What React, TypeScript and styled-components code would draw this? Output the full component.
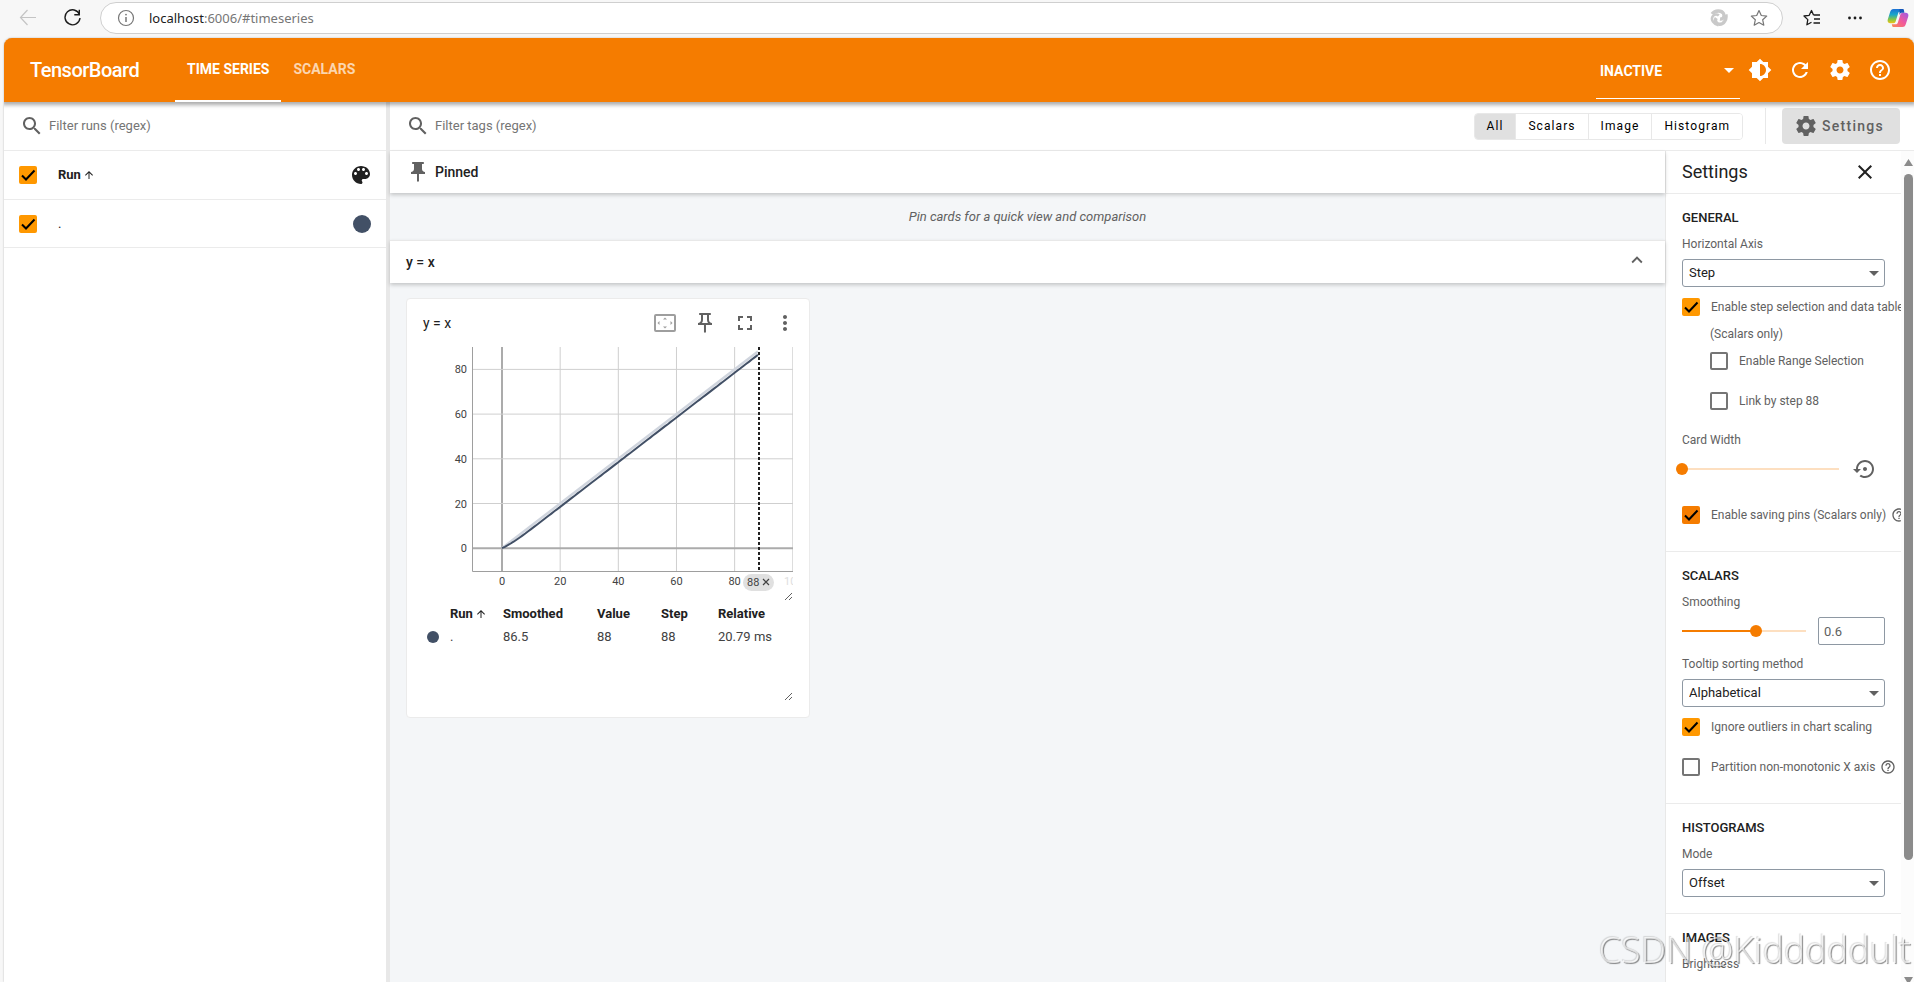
import React from "react";
import styled, { createGlobalStyle, css } from "styled-components";

const Global = createGlobalStyle`
  *, *::before, *::after { box-sizing: border-box; }
  html, body, #root { height: 100%; }
  body { margin: 0; overflow: hidden; background: #f7f7f7; color: #212121; font: 400 13px/20px Roboto, "Liberation Sans", sans-serif; }
  button, input, select { font: inherit; color: inherit; }
  button { border: 0; padding: 0; background: none; display: flex; align-items: center; justify-content: center; }
  svg { display: block; flex: none; }
  h1, h2, h3, p { margin: 0; }
`;

/* ---------- icons ---------- */

const paths = {
  search: "M15.5 14h-.79l-.28-.27C15.41 12.59 16 11.11 16 9.5 16 5.91 13.09 3 9.5 3S3 5.91 3 9.5 5.91 16 9.5 16c1.61 0 3.09-.59 4.23-1.57l.27.28v.79l5 4.99L20.49 19l-4.99-5zm-6 0C7.01 14 5 11.99 5 9.5S7.01 5 9.5 5 14 7.01 14 9.5 11.99 14 9.5 14z",
  gear: "M19.43 12.98c.04-.32.07-.64.07-.98s-.03-.66-.07-.98l2.11-1.65c.19-.15.24-.42.12-.64l-2-3.46c-.12-.22-.39-.3-.61-.22l-2.49 1c-.52-.4-1.08-.73-1.69-.98l-.38-2.65C14.46 2.18 14.25 2 14 2h-4c-.25 0-.46.18-.49.42l-.38 2.65c-.61.25-1.17.59-1.69.98l-2.49-1c-.23-.09-.49 0-.61.22l-2 3.46c-.13.22-.07.49.12.64l2.11 1.65c-.04.32-.07.65-.07.98s.03.66.07.98l-2.11 1.65c-.19.15-.24.42-.12.64l2 3.46c.12.22.39.3.61.22l2.49-1c.52.4 1.08.73 1.69.98l.38 2.65c.03.24.24.42.49.42h4c.25 0 .46-.18.49-.42l.38-2.65c.61-.25 1.17-.59 1.69-.98l2.49 1c.23.09.49 0 .61-.22l2-3.46c.12-.22.07-.49-.12-.64l-2.11-1.65zM12 15.5c-1.93 0-3.5-1.57-3.5-3.5s1.57-3.5 3.5-3.5 3.5 1.57 3.5 3.5-1.57 3.5-3.5 3.5z",
  help: "M11 18h2v-2h-2v2zm1-16C6.48 2 2 6.48 2 12s4.48 10 10 10 10-4.48 10-10S17.52 2 12 2zm0 18c-4.41 0-8-3.59-8-8s3.59-8 8-8 8 3.59 8 8-3.59 8-8 8zm0-14c-2.21 0-4 1.79-4 4h2c0-1.1.9-2 2-2s2 .9 2 2c0 2-3 1.75-3 5h2c0-2.25 3-2.5 3-5 0-2.21-1.79-4-4-4z",
  refresh: "M17.65 6.35C16.2 4.9 14.21 4 12 4c-4.42 0-7.99 3.58-7.99 8s3.57 8 7.99 8c3.73 0 6.84-2.55 7.73-6h-2.08c-.82 2.33-3.04 4-5.65 4-3.31 0-6-2.69-6-6s2.69-6 6-6c1.66 0 3.14.69 4.22 1.78L13 11h7V4l-2.35 2.35z",
  brightness: "M20 15.31L23.31 12 20 8.69V4h-4.69L12 .69 8.69 4H4v4.69L.69 12 4 15.31V20h4.69L12 23.31 15.31 20H20v-4.69zM12 18V6c3.31 0 6 2.69 6 6s-2.69 6-6 6z",
  close: "M19 6.41L17.59 5 12 10.59 6.41 5 5 6.41 10.59 12 5 17.59 6.41 19 12 13.41 17.59 19 19 17.59 13.41 12z",
  palette: "M12 3c-4.97 0-9 4.03-9 9s4.03 9 9 9c.83 0 1.5-.67 1.5-1.5 0-.39-.15-.74-.39-1.01-.23-.26-.38-.61-.38-.99 0-.83.67-1.5 1.5-1.5H16c2.76 0 5-2.24 5-5 0-4.42-4.03-8-9-8zm-5.5 9c-.83 0-1.5-.67-1.5-1.5S5.67 9 6.5 9 8 9.67 8 10.5 7.33 12 6.5 12zm3-4C8.67 8 8 7.33 8 6.5S8.67 5 9.5 5s1.5.67 1.5 1.5S10.33 8 9.5 8zm5 0c-.83 0-1.5-.67-1.5-1.5S13.67 5 14.5 5s1.5.67 1.5 1.5S15.33 8 14.5 8zm3 4c-.83 0-1.5-.67-1.5-1.5S16.67 9 17.5 9s1.5.67 1.5 1.5-.67 1.5-1.5 1.5z",
  up: "M4 12l1.41 1.41L11 7.83V20h2V7.83l5.58 5.59L20 12l-8-8-8 8z",
  pin: "M16 9V4h1c.55 0 1-.45 1-1s-.45-1-1-1H7c-.55 0-1 .45-1 1s.45 1 1 1h1v5c0 1.66-1.34 3-3 3v2h5.97v7l1 1 1-1v-7H19v-2c-1.66 0-3-1.34-3-3z",
  pinOutline: "M14 4v5c0 1.12.37 2.16 1 3H9c.65-.86 1-1.9 1-3V4h4m3-2H7c-.55 0-1 .45-1 1s.45 1 1 1h1v5c0 1.66-1.34 3-3 3v2h5.97v7l1 1 1-1v-7H19v-2c-1.66 0-3-1.34-3-3V4h1c.55 0 1-.45 1-1s-.45-1-1-1z",
  fullscreen: "M7 14H5v5h5v-2H7v-3zm-2-4h2V7h3V5H5v5zm12 7h-3v2h5v-5h-2v3zM14 5v2h3v3h2V5h-5z",
  more: "M12 8c1.1 0 2-.9 2-2s-.9-2-2-2-2 .9-2 2 .9 2 2 2zm0 2c-1.1 0-2 .9-2 2s.9 2 2 2 2-.9 2-2-.9-2-2-2zm0 6c-1.1 0-2 .9-2 2s.9 2 2 2 2-.9 2-2-.9-2-2-2z",
  less: "M12 8l-6 6 1.41 1.41L12 10.83l4.59 4.58L18 14z",
  restore: "M14 12c0-1.1-.9-2-2-2s-2 .9-2 2 .9 2 2 2 2-.9 2-2zm-2-9c-4.97 0-9 4.03-9 9H0l4 4 4-4H5c0-3.87 3.13-7 7-7s7 3.13 7 7-3.13 7-7 7c-1.51 0-2.91-.49-4.06-1.3l-1.42 1.44C8.04 20.3 9.94 21 12 21c4.97 0 9-4.03 9-9s-4.03-9-9-9z",
} as const;

const Icon = ({ name, size = 24, color = "currentColor" }: { name: keyof typeof paths; size?: number; color?: string }) => (
  <svg width={size} height={size} viewBox="0 0 24 24" fill={color} aria-hidden="true">
    <path d={paths[name]} />
  </svg>
);

const StarIcon = ({ color }: { color: string }) => (
  <svg width="18" height="18" viewBox="0 0 18 18" fill="none" stroke={color} strokeWidth="1.2" strokeLinejoin="round">
    <path d="M9 1.500L11.300 6.500L16.700 7.100L12.700 10.800L13.800 16.200L9 13.500L4.200 16.200L5.300 10.800L1.300 7.100L6.700 6.500Z" />
  </svg>
);

/* ---------- browser bar ---------- */

const BrowserBar = styled.div`
  flex: none;
  height: 38px;
  display: grid;
  grid-template-columns: 100px 1fr 131px;
  align-items: start;
  background: #f7f7f7;
`;
const NavButtons = styled.div`
  display: flex;
  gap: 26px;
  padding: 7px 0 0 18px;
`;
const AddressBar = styled.form`
  height: 32px;
  margin-top: 2px;
  padding: 0 14px 0 16px;
  display: flex;
  align-items: center;
  background: #fff;
  border: 1px solid #cfcfcf;
  border-radius: 16px;
  gap: 14px;
`;
const Address = styled.a`
  flex: 1;
  color: #767676;
  text-decoration: none;
  font: 13px/20px "Noto Sans", "Open Sans", sans-serif;
  span { color: #1b1b1b; }
`;
const AddressTools = styled.div`
  display: flex;
  gap: 22px;
`;
const BrowserTools = styled.div`
  display: flex;
  gap: 21px;
  padding: 7px 0 0 18px;
`;

const Browser = () => (
  <BrowserBar>
    <NavButtons>
      <button aria-label="Back">
        <svg width="20" height="22" viewBox="0 0 20 22" fill="none" stroke="#c4c4c4" strokeWidth="1.2">
          <path d="M18 10.500H2.500M9.500 3L2.500 10.500L9.500 18" />
        </svg>
      </button>
      <button aria-label="Reload">
        <svg width="18" height="22" viewBox="0 0 18 22" fill="none" stroke="#1b1b1b" strokeWidth="1.4">
          <path d="M15.500 7.500A7.500 7.500 0 1 0 16 11M15.300 2.800V7.800H10.300" />
        </svg>
      </button>
    </NavButtons>
    <AddressBar onSubmit={(e) => e.preventDefault()}>
      <svg width="18" height="18" viewBox="0 0 18 18" fill="none" stroke="#767676" strokeWidth="1.2">
        <circle cx="9" cy="9" r="7.500" />
        <path d="M9 8V13" strokeWidth="1.5" />
        <circle cx="9" cy="5.600" r=".9" fill="#767676" stroke="none" />
      </svg>
      <Address href="#timeseries"><span>localhost</span>:6006/#timeseries</Address>
      <AddressTools>
        <svg width="18" height="18" viewBox="0 0 18 18" fill="none" stroke="#c9c9c9" strokeWidth="3.4">
          <path d="M2 5C5 1 11.500 1 13.500 4.500C15 7.500 13 10.500 10 10" />
          <path d="M15.800 5.500C17 10.500 13.500 15.500 9.500 15.300C6 15 4.500 11.500 6.300 9" />
          <path d="M8.500 16.200C3.500 15 .500 10.500 2.800 7.200C4.500 5 7.500 5.200 8.800 6.500" strokeWidth="2.6" />
        </svg>
        <button aria-label="Add to favorites"><StarIcon color="#767676" /></button>
      </AddressTools>
    </AddressBar>
    <BrowserTools>
      <button aria-label="Favorites">
        <svg width="22" height="22" viewBox="-1 0 22 22" fill="none" stroke="#1b1b1b" strokeWidth="1.3" strokeLinejoin="round">
          <path d="M11.500 8L9.500 3.500L7.200 8.300L2 9L5.800 12.600L4.900 17.800L9.500 15.300M11.500 8H18M12 12H18M11.500 16H18" />
        </svg>
      </button>
      <button aria-label="More">
        <svg width="22" height="22" viewBox="-1 0 22 22" fill="#1b1b1b">
          <circle cx="4.500" cy="11" r="1.400" /><circle cx="10" cy="11" r="1.400" /><circle cx="15.500" cy="11" r="1.400" />
        </svg>
      </button>
      <button aria-label="Copilot">
        <svg width="22" height="22" viewBox="0 0 23 22">
          <defs>
            <linearGradient id="cpA" x1="0" y1="0" x2="0" y2="1"><stop offset="0" stopColor="#1b6fd6" /><stop offset=".4" stopColor="#1aa7c9" /><stop offset=".75" stopColor="#8cc63f" /><stop offset="1" stopColor="#f3c316" /></linearGradient>
            <linearGradient id="cpB" x1="1" y1="0" x2="0" y2="1"><stop offset="0" stopColor="#9a5be8" /><stop offset=".5" stopColor="#f2599b" /><stop offset="1" stopColor="#fb8a4e" /></linearGradient>
          </defs>
          <path d="M16.500 1.500H7C4.500 1.500 3.800 3 3.200 5L.8 12.500C0 15 1.500 16.500 3.500 16.500H6.500C8.500 16.500 9 15 9.500 13L11.700 6C12.200 4.500 13 4.500 14 4.500H18C17.600 3 17.500 1.500 16.500 1.500Z" fill="url(#cpA)" />
          <path d="M6.500 20.500H16C18.500 20.500 19.200 19 19.800 17L22.200 9.500C23 7 21.500 5.500 19.500 5.500H16.500C14.500 5.500 14 7 13.500 9L11.300 16C10.800 17.500 10 17.500 9 17.500H5C5.400 19 5.500 20.500 6.500 20.500Z" fill="url(#cpB)" />
          <path d="M13 1.500H16.500C17.500 1.500 17.700 3 18.200 5.500H16C14.500 5.500 13.500 6 13 8Z" fill="#1656b8" />
        </svg>
      </button>
    </BrowserTools>
  </BrowserBar>
);

/* ---------- page frame ---------- */

const Screen = styled.div`
  height: 100vh;
  display: flex;
  flex-direction: column;
`;
const Frame = styled.div`
  flex: 1;
  min-height: 0;
  margin-left: 4px;
  display: flex;
  flex-direction: column;
  background: #fff;
  border-radius: 8px 8px 0 0;
  box-shadow: 0 0 2px #0004;
  overflow: hidden;
`;
const Header = styled.header`
  position: relative;
  z-index: 2;
  flex: none;
  height: 64px;
  padding: 0 22px 0 26px;
  display: flex;
  align-items: center;
  background: #f57c00;
  color: #fff;
  box-shadow: 0 1px 4px 2px #0005;
`;
const Brand = styled.h1`
  width: 145px;
  font-size: 20px;
  line-height: 24px;
  font-weight: 500;
  letter-spacing: -0.025em;
`;
const Tabs = styled.nav`
  flex: 1;
  align-self: stretch;
  display: flex;
`;
const Tab = styled.a<{ $active?: boolean }>`
  display: flex;
  align-items: center;
  padding: 0 12px;
  border-bottom: 2px solid ${(p) => (p.$active ? "#fff" : "transparent")};
  color: ${(p) => (p.$active ? "#fff" : "#ffffffb3")};
  font-size: 14px;
  font-weight: 700;
  text-decoration: none;
`;
const SelectWrap = styled.div`
  position: relative;
  display: flex;
`;
const Caret = styled.svg`
  position: absolute;
  right: 6px;
  top: 50%;
  margin-top: -2px;
  pointer-events: none;
`;
const StatusSelect = styled.select`
  width: 144px;
  height: 56px;
  margin-top: 2px;
  padding: 0 4px;
  appearance: none;
  border: 0;
  border-bottom: 1px solid #fff;
  background: transparent;
  font-size: 14px;
  font-weight: 700;
`;
const HeaderActions = styled.div`
  display: flex;
  gap: 16px;
  margin-left: 8px;
`;

const CaretDown = ({ color }: { color: string }) => (
  <Caret width="10" height="5" viewBox="0 0 10 5" fill={color}><path d="M0 0H10L5 5Z" /></Caret>
);

/* ---------- checkbox ---------- */

const CheckInput = styled.input<{ $deep?: boolean }>`
  appearance: none;
  flex: none;
  width: 18px;
  height: 18px;
  margin: 0;
  border: 2px solid #757575;
  border-radius: 2px;
  &:checked {
    border: 0;
    background: ${(p) => (p.$deep ? "#f57c00" : "#ff9800")};
  }
`;
const CheckBox = styled.span`
  position: relative;
  display: flex;
  width: 18px;
  svg { position: absolute; inset: 0; pointer-events: none; }
`;
const Check = ({ id, label, on, deep }: { id: string; label?: string; on?: boolean; deep?: boolean }) => (
  <CheckBox>
    <CheckInput type="checkbox" id={id} aria-label={label} defaultChecked={on} $deep={deep} />
    {on && (
      <svg width="18" height="18" viewBox="0 0 18 18" fill="none" stroke="#000" strokeWidth="2">
        <path d="M3 9.500L7 13.500L15.500 4.500" />
      </svg>
    )}
  </CheckBox>
);

/* ---------- runs sidebar ---------- */

const Body = styled.div`
  flex: 1;
  min-height: 0;
  display: flex;
`;
const Runs = styled.aside`
  flex: none;
  width: 386px;
  border-right: 4px solid #e8e8e8;
  background: #fff;
`;
const FilterBar = styled.div`
  height: 49px;
  padding: 0 14px 0 16px;
  display: flex;
  align-items: center;
  gap: 5px;
  border-bottom: 1px solid #ebebeb;
  color: #616161;
`;
const FilterInput = styled.input`
  flex: 1;
  min-width: 0;
  border: 0;
  padding: 0;
  outline: 0;
  background: none;
  &::placeholder { color: #757575; opacity: 1; }
`;
const RunTable = styled.table`
  width: 100%;
  border-spacing: 0;
  th, td {
    height: 49px;
    padding: 0;
    text-align: left;
    border-bottom: 1px solid #ebebeb;
  }
  td { height: 48px; }
  th:first-child, td:first-child { width: 54px; padding-left: 15px; }
  th:last-child, td:last-child { width: 37px; }
`;
const SortLabel = styled.span`
  display: flex;
  align-items: center;
  gap: 2px;
  font-weight: 700;
`;
const Swatch = styled.span<{ $size: number }>`
  display: block;
  width: ${(p) => p.$size}px;
  height: ${(p) => p.$size}px;
  border-radius: 50%;
  background: #425066;
`;
const RunSwatch = styled.button`
  margin-left: 4px;
`;

/* ---------- main pane ---------- */

const Main = styled.main`
  flex: 1;
  min-width: 0;
  display: flex;
  flex-direction: column;
  background: #fff;
`;
const Toggles = styled.div`
  display: flex;
  height: 27px;
  border: 1px solid #e8e8e8;
  border-radius: 4px;
  overflow: hidden;
`;
const Toggle = styled.button<{ $on?: boolean }>`
  padding: 0 12px;
  color: #000;
  font-size: 12px;
  letter-spacing: 0.09em;
  background: ${(p) => (p.$on ? "#e0e0e0" : "#fff")};
  & + & { border-left: 1px solid #e8e8e8; }
`;
const SettingsSlot = styled.div`
  height: 36px;
  margin-left: 17px;
  padding-left: 16px;
  border-left: 1px solid #e8e8e8;
  display: flex;
`;
const SettingsButton = styled.button`
  height: 36px;
  padding: 0 16px 0 12px;
  gap: 4px;
  border-radius: 4px;
  background: #e0e0e0;
  color: #616161;
  font-size: 14px;
  font-weight: 500;
  letter-spacing: 0.09em;
`;
const Split = styled.div`
  flex: 1;
  min-height: 0;
  display: flex;
`;
const Cards = styled.div`
  flex: 1;
  min-width: 0;
  background: #f4f6f8;
`;
const GroupHeader = styled.div<{ $ruled?: boolean }>`
  position: relative;
  height: ${(p) => (p.$ruled ? 43 : 42)}px;
  padding: 0 16px;
  display: flex;
  align-items: center;
  gap: 5px;
  background: #fff;
  box-shadow: 0 2px 4px #0003;
  ${(p) => p.$ruled && css`border-top: 1px solid #e8e8e8;`}
`;
const GroupTitle = styled.h2`
  flex: 1;
  font-size: 14px;
  line-height: 20px;
  font-weight: 500;
`;
const CollapseButton = styled.button`
  align-self: flex-start;
  padding: 8px 1px;
  color: #616161;
`;
const EmptyNote = styled.p`
  height: 47px;
  display: flex;
  align-items: center;
  justify-content: center;
  color: #616161;
  font-style: italic;
`;
const Card = styled.article`
  width: 404px;
  margin: 15px 16px;
  padding: 0 16px 16px;
  background: #fff;
  border: 1px solid #ebebeb;
  border-radius: 4px;
`;
const CardHead = styled.div`
  height: 48px;
  display: flex;
  align-items: center;
  justify-content: space-between;
  font-size: 14px;
`;
const CardActions = styled.div`
  display: flex;
  gap: 16px;
  margin-right: -4px;
  color: #616161;
`;
const Chart = styled.svg`
  display: block;
  width: 100%;
  height: 254px;
  font-size: 11px;
  fill: #424242;
`;
const DataTable = styled.table`
  width: 366px;
  margin: 1px 0 0 -1px;
  table-layout: fixed;
  border-spacing: 0;
  th, td { padding: 0; text-align: left; height: 23px; }
  td { color: #424242; }
  td:first-child { padding-left: 5px; }
`;
const TableBox = styled.div`
  height: 100px;
  display: flex;
  flex-direction: column;
  justify-content: space-between;
`;
const Grip = styled.svg`
  align-self: flex-end;
`;

const xs = [0, 20, 40, 60, 80, 100];
const ys = [0, 20, 40, 60, 80];
const px = (v: number) => 79 + v * 2.908;
const py = (v: number) => 201.2 - v * 2.235;

const smoothed = (() => {
  let last = 0;
  let weight = 0;
  const pts: string[] = [];
  for (let i = 0; i <= 88; i++) {
    last = last * 0.6 + i * 0.4;
    weight = weight * 0.6 + 0.4;
    pts.push(`${px(i).toFixed(1)},${py(last / weight).toFixed(1)}`);
  }
  return pts.join(" ");
})();

const LineChart = () => (
  <Chart viewBox="0 0 370 254" role="img" aria-label="y = x line chart">
    {xs.map((v) => (
      <path key={v} d={`M${px(v)} 0V224`} stroke={v ? "#cfcfcf" : "#ababab"} strokeWidth={v ? 1 : 2} />
    ))}
    {ys.map((v) => (
      <path key={v} d={`M50 ${py(v)}H371`} stroke={v ? "#cfcfcf" : "#ababab"} strokeWidth={v ? 1 : 2} />
    ))}
    <path d="M49.500 0V224.500H371" fill="none" stroke="#9e9e9e" />
    <path d={`M${px(0)} ${py(0)}L${px(88)} ${py(88)}`} stroke="#d0d5de" strokeWidth="2.5" />
    <polyline points={smoothed} fill="none" stroke="#425066" strokeWidth="2" />
    <path d="M336 0V224" stroke="#212121" strokeWidth="2" strokeDasharray="3 2" />
    {ys.map((v) => (
      <text key={v} x="44" y={py(v) + 4} textAnchor="end">{v}</text>
    ))}
    {xs.slice(0, 5).map((v) => (
      <text key={v} x={px(v)} y="238" textAnchor="middle">{v}</text>
    ))}
    <text x="361" y="238" fill="#dedede">10</text>
    <rect x="320" y="227" width="31" height="17" rx="8.500" fill="#e0e0e0" />
    <text x="324" y="239">88</text>
    <path d="M340 232L346 238M346 232L340 238" stroke="#424242" strokeWidth="1.2" />
    <path d="M362 253L369 246M366 253L369 250" stroke="#616161" />
  </Chart>
);

/* ---------- settings panel ---------- */

const Panel = styled.aside`
  flex: none;
  width: 236px;
  border-left: 1px solid #e8e8e8;
  background: #fff;
  overflow: hidden;
`;
const PanelHead = styled.div`
  height: 43px;
  padding: 0 24px 0 16px;
  display: flex;
  align-items: center;
  justify-content: space-between;
  border-bottom: 1px solid #ebebeb;
  h2 { font-size: 18px; line-height: 24px; font-weight: 400; }
`;
const Section = styled.section`
  padding: 16px;
  border-bottom: 1px solid #ebebeb;
  color: #616161;
  font-size: 12px;
`;
const SectionTitle = styled.h3`
  margin-bottom: 8px;
  color: #212121;
  font-size: 13px;
  line-height: 16px;
  font-weight: 500;
`;
const FieldLabel = styled.label`
  display: block;
  line-height: 20px;
  margin-bottom: 5px;
`;
const Select = styled.select`
  width: 100%;
  height: 28px;
  padding: 0 6px;
  appearance: none;
  border: 1px solid #8e98a3;
  border-radius: 3px;
  background: #fff;
  color: #212121;
  font-size: 13px;
`;
const CheckRow = styled.div<{ $nested?: boolean }>`
  height: 40px;
  margin-left: ${(p) => (p.$nested ? 28 : 0)}px;
  display: flex;
  align-items: center;
  gap: 11px;
  white-space: nowrap;
`;
const Continued = styled.label`
  display: block;
  margin: -4px 0 -4px 28px;
  line-height: 22px;
`;
const SliderRow = styled.div`
  height: 28px;
  display: flex;
  align-items: center;
  justify-content: space-between;
`;
const Slider = styled.input<{ $fill: number }>`
  appearance: none;
  flex: none;
  margin: 0 -6px;
  height: 12px;
  background: linear-gradient(to right, #f57c00 ${(p) => p.$fill}%, #fddfc0 ${(p) => p.$fill}%) center / calc(100% - 12px) 2px no-repeat;
  &::-webkit-slider-thumb {
    appearance: none;
    width: 12px;
    height: 12px;
    border-radius: 50%;
    background: #f57c00;
  }
`;
const WidthSlider = styled(Slider)` width: 169px; `;
const SmoothSlider = styled(Slider)` width: 136px; `;
const NumberBox = styled.input`
  width: 67px;
  height: 28px;
  padding: 0 5px;
  border: 1px solid #8e98a3;
  border-radius: 2px;
  color: #616161;
  font-size: 13px;
`;
const ResetButton = styled.button`
  margin-right: 8px;
`;
const Gap = styled.div`
  height: 9px;
`;
const WideGap = styled.div`
  height: 12px;
`;
const HelpMark = styled.span`
  margin-left: -6px;
`;
const ScrollBar = styled.div`
  flex: none;
  width: 13px;
  padding: 8px 1px 0 3px;
  display: flex;
  flex-direction: column;
  background: #fcfcfc;
`;
const Thumb = styled.div`
  height: calc(100% - 137px);
  margin: 8px 0;
  border-radius: 5px;
  background: #8b8b8b;
`;
const ScrollTail = styled.div`
  flex: 1;
  display: flex;
  align-items: flex-end;
`;

const DropDown = ({ id, label, value }: { id: string; label: string; value: string }) => (
  <>
    <FieldLabel htmlFor={id}>{label}</FieldLabel>
    <SelectWrap>
      <Select id={id} defaultValue={value}><option>{value}</option></Select>
      <CaretDown color="#616161" />
    </SelectWrap>
  </>
);

const SettingsPanel = () => (
  <Panel>
    <PanelHead>
      <h2>Settings</h2>
      <button aria-label="Close settings"><Icon name="close" /></button>
    </PanelHead>
    <Section>
      <SectionTitle>GENERAL</SectionTitle>
      <DropDown id="axis" label="Horizontal Axis" value="Step" />
      <CheckRow>
        <Check id="stepsel" on />
        <label htmlFor="stepsel">Enable step selection and data table</label>
      </CheckRow>
      <Continued htmlFor="stepsel">(Scalars only)</Continued>
      <CheckRow $nested>
        <Check id="range" />
        <label htmlFor="range">Enable Range Selection</label>
      </CheckRow>
      <CheckRow $nested>
        <Check id="link" />
        <label htmlFor="link">Link by step 88</label>
      </CheckRow>
      <Gap />
      <FieldLabel htmlFor="cardw">Card Width</FieldLabel>
      <SliderRow>
        <WidthSlider id="cardw" type="range" min="0" max="100" defaultValue="0" $fill={0} />
        <ResetButton aria-label="Reset card width"><Icon name="restore" /></ResetButton>
      </SliderRow>
      <WideGap />
      <CheckRow>
        <Check id="pins" on deep />
        <label htmlFor="pins">Enable saving pins (Scalars only)</label>
        <HelpMark><Icon name="help" size={16} /></HelpMark>
      </CheckRow>
    </Section>
    <Section>
      <SectionTitle>SCALARS</SectionTitle>
      <FieldLabel htmlFor="smooth">Smoothing</FieldLabel>
      <SliderRow>
        <SmoothSlider id="smooth" type="range" min="0" max="1" step="0.01" defaultValue="0.6" $fill={60} />
        <NumberBox aria-label="Smoothing value" defaultValue="0.6" />
      </SliderRow>
      <Gap />
      <DropDown id="sort" label="Tooltip sorting method" value="Alphabetical" />
      <CheckRow>
        <Check id="outliers" on />
        <label htmlFor="outliers">Ignore outliers in chart scaling</label>
      </CheckRow>
      <CheckRow>
        <Check id="partition" />
        <label htmlFor="partition">Partition non-monotonic X axis</label>
        <HelpMark><Icon name="help" size={16} /></HelpMark>
      </CheckRow>
    </Section>
    <Section>
      <SectionTitle>HISTOGRAMS</SectionTitle>
      <DropDown id="mode" label="Mode" value="Offset" />
    </Section>
    <Section>
      <SectionTitle>IMAGES</SectionTitle>
      <FieldLabel as="span">Brightness</FieldLabel>
    </Section>
  </Panel>
);

const Watermark = styled.div`
  position: fixed;
  z-index: 5;
  right: 3px;
  bottom: 10px;
  font: 300 36px/44px "Open Sans", "Liberation Sans", sans-serif;
  color: #ffffffb0;
  text-shadow: 1px 1px 1px #0007, -1px -1px 1px #0002;
  pointer-events: none;
`;

export default function App() {
  return (
    <Screen>
      <Global />
      <Browser />
      <Frame>
        <Header>
          <Brand>TensorBoard</Brand>
          <Tabs>
            <Tab href="#timeseries" $active>TIME SERIES</Tab>
            <Tab href="#scalars">SCALARS</Tab>
          </Tabs>
          <SelectWrap>
            <StatusSelect aria-label="Plugin" defaultValue="INACTIVE"><option>INACTIVE</option></StatusSelect>
            <CaretDown color="#fff" />
          </SelectWrap>
          <HeaderActions>
            <button aria-label="Toggle theme"><Icon name="brightness" /></button>
            <button aria-label="Reload data"><Icon name="refresh" /></button>
            <button aria-label="Open settings"><Icon name="gear" /></button>
            <button aria-label="Help"><Icon name="help" /></button>
          </HeaderActions>
        </Header>
        <Body>
          <Runs>
            <FilterBar>
              <Icon name="search" />
              <FilterInput aria-label="Filter runs" placeholder="Filter runs (regex)" />
            </FilterBar>
            <RunTable>
              <thead>
                <tr>
                  <th><Check id="all" label="Select all runs" on /></th>
                  <th><SortLabel>Run <Icon name="up" size={12} /></SortLabel></th>
                  <th><button aria-label="Color runs"><Icon name="palette" /></button></th>
                </tr>
              </thead>
              <tbody>
                <tr>
                  <td><Check id="run0" label="Select run" on /></td>
                  <td>.</td>
                  <td><RunSwatch aria-label="Run color"><Swatch $size={18} /></RunSwatch></td>
                </tr>
              </tbody>
            </RunTable>
          </Runs>
          <Main>
            <FilterBar>
              <Icon name="search" />
              <FilterInput aria-label="Filter tags" placeholder="Filter tags (regex)" />
              <Toggles>
                <Toggle $on>All</Toggle>
                <Toggle>Scalars</Toggle>
                <Toggle>Image</Toggle>
                <Toggle>Histogram</Toggle>
              </Toggles>
              <SettingsSlot>
                <SettingsButton><Icon name="gear" />Settings</SettingsButton>
              </SettingsSlot>
            </FilterBar>
            <Split>
              <Cards>
                <GroupHeader>
                  <Icon name="pin" color="#616161" />
                  <GroupTitle>Pinned</GroupTitle>
                </GroupHeader>
                <EmptyNote>Pin cards for a quick view and comparison</EmptyNote>
                <GroupHeader $ruled>
                  <GroupTitle>y = x</GroupTitle>
                  <CollapseButton aria-label="Collapse group"><Icon name="less" size={22} /></CollapseButton>
                </GroupHeader>
                <Card>
                  <CardHead>
                    <span>y = x</span>
                    <CardActions>
                      <button aria-label="Fit to data">
                        <svg width="24" height="24" viewBox="0 0 24 24" fill="none" stroke="#9e9e9e" strokeWidth="2">
                          <rect x="2" y="4" width="20" height="16" rx="1" />
                          <path d="M10 8.500L12 6.500L14 8.500ZM10 15.500L12 17.500L14 15.500ZM6.500 10L4.500 12L6.500 14ZM17.500 10L19.500 12L17.500 14Z" fill="#9e9e9e" stroke="none" />
                        </svg>
                      </button>
                      <button aria-label="Pin card"><Icon name="pinOutline" /></button>
                      <button aria-label="Full size"><Icon name="fullscreen" /></button>
                      <button aria-label="More options"><Icon name="more" /></button>
                    </CardActions>
                  </CardHead>
                  <LineChart />
                  <TableBox>
                    <DataTable>
                      <colgroup>
                        <col width="28" /><col width="53" /><col width="94" /><col width="64" /><col width="57" /><col width="70" />
                      </colgroup>
                      <thead>
                        <tr>
                          <th />
                          <th><SortLabel>Run <Icon name="up" size={12} /></SortLabel></th>
                          <th>Smoothed</th>
                          <th>Value</th>
                          <th>Step</th>
                          <th>Relative</th>
                        </tr>
                      </thead>
                      <tbody>
                        <tr>
                          <td><Swatch $size={12} /></td>
                          <td>.</td>
                          <td>86.5</td>
                          <td>88</td>
                          <td>88</td>
                          <td>20.79 ms</td>
                        </tr>
                      </tbody>
                    </DataTable>
                    <Grip width="9" height="9" viewBox="0 0 9 9" stroke="#616161">
                      <path d="M1 8L8 1M5 8L8 5" />
                    </Grip>
                  </TableBox>
                </Card>
              </Cards>
              <SettingsPanel />
              <ScrollBar>
                <svg width="9" height="7" viewBox="0 0 9 7" fill="#8b8b8b"><path d="M4.500 0L9 7H0Z" /></svg>
                <Thumb />
                <ScrollTail>
                  <svg width="9" height="5" viewBox="0 0 9 5" fill="#8b8b8b"><path d="M0 0H9L6 5H3Z" /></svg>
                </ScrollTail>
              </ScrollBar>
            </Split>
          </Main>
        </Body>
      </Frame>
      <Watermark>CSDN @Kidddddult</Watermark>
    </Screen>
  );
}
